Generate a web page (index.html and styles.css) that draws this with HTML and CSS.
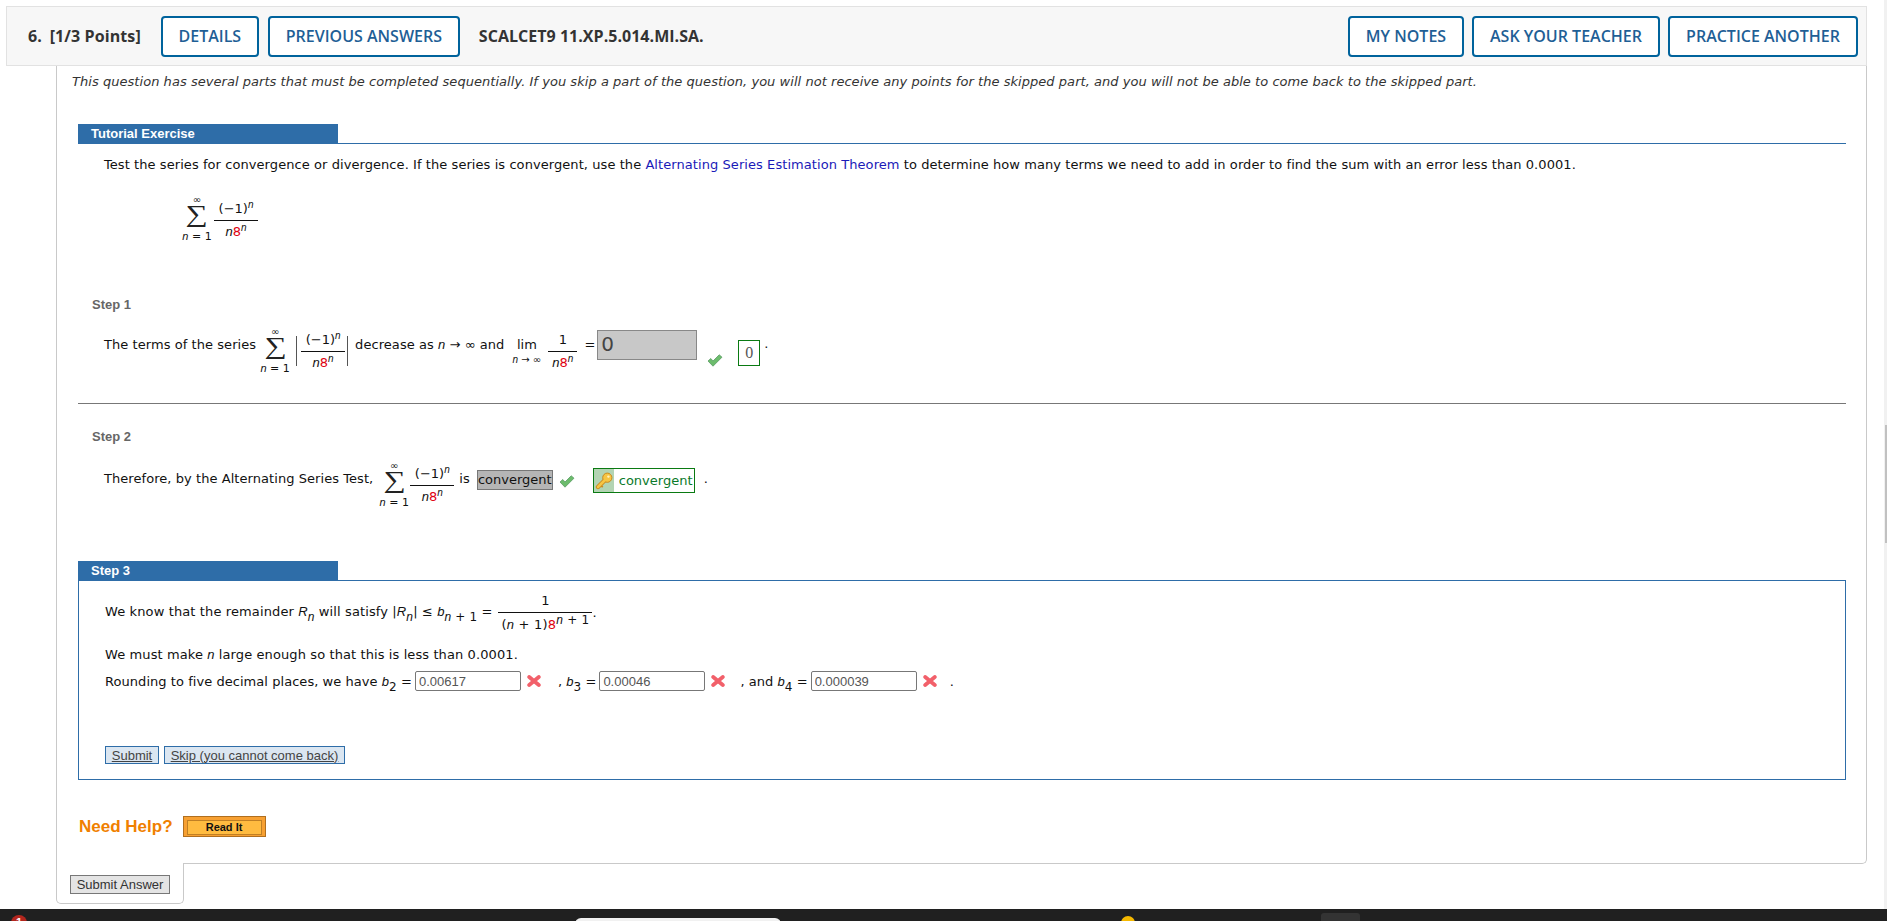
FILE: index.html
```html
<!DOCTYPE html>
<html lang="en">
<head>
<meta charset="utf-8">
<title>Question 6</title>
<link rel="stylesheet" href="styles.css">
</head>
<body>
<div class="window">
  <div class="page">
    <header class="q-head">
      <span class="q-num">6.</span>
      <span class="q-pts">[1/3 Points]</span>
      <a class="hbtn hbtn-details">DETAILS</a>
      <a class="hbtn hbtn-prev">PREVIOUS ANSWERS</a>
      <span class="q-code">SCALCET9 11.XP.5.014.MI.SA.</span>
      <span class="spacer"></span>
      <a class="hbtn hbtn-notes">MY NOTES</a>
      <a class="hbtn hbtn-ask">ASK YOUR TEACHER</a>
      <a class="hbtn hbtn-practice">PRACTICE ANOTHER</a>
    </header>
    <main class="panel">
      <p class="intro">This question has several parts that must be completed sequentially. If you skip a part of the question, you will not receive any points for the skipped part, and you will not be able to come back to the skipped part.</p>
      <div class="sec-head tutorial"><span class="sec-tab">Tutorial Exercise</span></div>
      <p class="problem">Test the series for convergence or divergence. If the series is convergent, use the <a class="term">Alternating Series Estimation Theorem</a> to determine how many terms we need to add in order to find the sum with an error less than 0.0001.</p>
      <div class="display-sum">
        <span class="sum"><span class="sum-top">∞</span><span class="sum-sym">∑</span><span class="sum-bot"><i>n</i> = 1</span></span>
        <span class="frac f-series"><span class="num">(−1)<sup><i>n</i></sup></span><span class="den"><i>n</i><b class="red">8</b><sup><i>n</i></sup></span></span>
      </div>

      <div class="step-label step1-label">Step 1</div>
      <div class="mrow row1">
        <span class="t">The terms of the series</span>
        <span class="sum s-a"><span class="sum-top">∞</span><span class="sum-sym">∑</span><span class="sum-bot"><i>n</i> = 1</span></span>
        <span class="absv">
          <span class="frac f-series"><span class="num">(−1)<sup><i>n</i></sup></span><span class="den"><i>n</i><b class="red">8</b><sup><i>n</i></sup></span></span>
        </span>
        <span class="t t-dec">decrease as <i>n</i> → ∞ and</span>
        <span class="lim"><span class="lim-top">lim</span><span class="lim-bot"><i>n</i> → ∞</span></span>
        <span class="frac f-one"><span class="num">1</span><span class="den"><i>n</i><b class="red">8</b><sup><i>n</i></sup></span></span>
        <span class="t t-eq">=</span>
        <span class="ans-grey">0</span>
        <svg class="check c-a" viewBox="0 0 16 13"><path d="M1 7 L3.8 4.5 L6 7 L12.2 .8 L15 3.2 L6 12.2 Z" fill="#6cbc6c" stroke="#5c9c66" stroke-width=".8"/></svg>
        <span class="ans-box">0</span>
        <span class="t t-dot">.</span>
      </div>

      <hr class="rule">

      <div class="step-label step2-label">Step 2</div>
      <div class="mrow row2">
        <span class="t">Therefore, by the Alternating Series Test,</span>
        <span class="sum s-b"><span class="sum-top">∞</span><span class="sum-sym">∑</span><span class="sum-bot"><i>n</i> = 1</span></span>
        <span class="frac f-series f-b"><span class="num">(−1)<sup><i>n</i></sup></span><span class="den"><i>n</i><b class="red">8</b><sup><i>n</i></sup></span></span>
        <span class="t t-is">is</span>
        <span class="ans-word">convergent</span>
        <svg class="check c-b" viewBox="0 0 16 13"><path d="M1 7 L3.8 4.5 L6 7 L12.2 .8 L15 3.2 L6 12.2 Z" fill="#6cbc6c" stroke="#5c9c66" stroke-width=".8"/></svg>
        <span class="key-box">
          <span class="key-cell">
            <svg class="key" viewBox="0 0 18 18"><path d="M9 9 L3 15" stroke="#c98a1f" stroke-width="4.4" stroke-linecap="round"/><path d="M5.5 13.5 L7.8 15" stroke="#c98a1f" stroke-width="2"/><circle cx="12.3" cy="5.7" r="4.6" fill="#f6c544" stroke="#c98a1f"/><path d="M9 9 L3 15" stroke="#f6c544" stroke-width="2.6" stroke-linecap="round"/><circle cx="13.4" cy="4.6" r="1.2" fill="#fff2bf"/></svg>
          </span>
          <span class="key-text">convergent</span>
        </span>
        <span class="t t-dot2">.</span>
      </div>

      <div class="sec-head step3-head"><span class="sec-tab">Step 3</span></div>
      <section class="step3">
        <div class="mrow row3a">
          <span class="t t-know">We know that the remainder <i>R</i><sub><i>n</i></sub> will satisfy |<i>R</i><sub><i>n</i></sub>| ≤ <i>b</i><sub><i>n</i> + 1</sub> =</span>
          <span class="frac f-rem"><span class="num">1</span><span class="den">(<i>n</i> + 1)<b class="red">8</b><sup><i>n</i> + 1</sup></span></span>
          <span class="t-per">.</span>
        </div>
        <p class="line l-must">We must make <i>n</i> large enough so that this is less than 0.0001.</p>
        <div class="mrow row3c">
          <span class="t3">Rounding to five decimal places, we have <i>b</i><sub>2</sub> =</span>
          <input class="num-in" value="0.00617" readonly>
          <svg class="cross" viewBox="0 0 14 12"><path d="M2.2 2 L11.8 10 M11.8 2 L2.2 10" stroke="#f2606a" stroke-width="3.8" stroke-linecap="round"/></svg>
          <span class="t3 t-b3">, <i>b</i><sub>3</sub> =</span>
          <input class="num-in" value="0.00046" readonly>
          <svg class="cross" viewBox="0 0 14 12"><path d="M2.2 2 L11.8 10 M11.8 2 L2.2 10" stroke="#f2606a" stroke-width="3.8" stroke-linecap="round"/></svg>
          <span class="t3 t-b4">, and <i>b</i><sub>4</sub> =</span>
          <input class="num-in" value="0.000039" readonly>
          <svg class="cross" viewBox="0 0 14 12"><path d="M2.2 2 L11.8 10 M11.8 2 L2.2 10" stroke="#f2606a" stroke-width="3.8" stroke-linecap="round"/></svg>
          <span class="t3 t-end">.</span>
        </div>
        <div class="step-btns">
          <button class="sbtn sbtn-submit">Submit</button>
          <button class="sbtn sbtn-skip">Skip (you cannot come back)</button>
        </div>
      </section>

      <div class="help">
        <span class="help-t">Need Help?</span>
        <button class="read"><span class="read-in">Read It</span></button>
      </div>
    </main>
    <div class="submit-tab"><button class="submit-ans">Submit Answer</button></div>
  </div>
  <div class="scrollbar"><div class="thumb"></div></div>
</div>
<footer class="taskbar">
  <span class="badge">1</span>
  <span class="pill"></span>
  <span class="dot"></span>
  <span class="tile"></span>
</footer>
</body>
</html>
```
FILE: styles.css
```css
* { box-sizing: border-box; }
html, body { margin: 0; height: 921px; overflow: hidden; background: #fff; }
body { font-family: "DejaVu Sans", Verdana, sans-serif; font-size: 13px; color: #111; }
.window { display: flex; height: 909px; overflow: hidden; }
.page { flex: 1; min-width: 0; padding: 6px 17px 0 6px; }
.scrollbar { width: 3px; background: #f1f1f1; padding-top: 425px; }
.thumb { height: 118px; width: 2px; margin-left: 1px; background: #c1c1c1; }

.q-head { height: 60px; display: flex; align-items: center; background: #f7f7f7; border: 1px solid #e2e2e2; padding: 0 8px 0 21px; font-family: "Open Sans", sans-serif; font-size: 16px; font-weight: 600; color: #333; }
.q-num, .q-pts, .q-code { font-weight: 700; }
.q-pts { margin-left: 8px; margin-right: 20px; letter-spacing: .1px; }
.q-code { letter-spacing: .03px; }
.hbtn { height: 41px; display: flex; align-items: center; justify-content: center; border: 2px solid #00639c; border-radius: 4px; color: #1f5f96; background: #fff; margin-right: 8px; padding-bottom: 1px; }
.hbtn-details { width: 98px; margin-right: 9px; }
.hbtn-prev { width: 192px; margin-right: 19px; }
.hbtn-notes { width: 116px; }
.hbtn-ask { width: 188px; }
.hbtn-practice { width: 190px; margin-right: 0; }
.spacer { flex: 1; }

.panel { height: 798px; margin-left: 50px; border: 1px solid #c9c9c9; border-top: 0; border-radius: 0 0 5px 0; padding: 6px 20px 0 21px; }
.intro { margin: 0 0 0 -6px; line-height: 20px; font-style: italic; color: #333; white-space: nowrap; letter-spacing: .044px; }
.sec-head { height: 20px; border-bottom: 1px solid #2e6da8; }
.tutorial { margin-top: 32px; }
.sec-tab { display: block; width: 260px; height: 20px; background: #2e6da8; color: #fff; font: bold 13px/19px "Liberation Sans", sans-serif; padding-left: 13px; }
.problem { margin: 11px 0 0 26px; line-height: 20px; white-space: nowrap; letter-spacing: .07px; }
.term { color: #1a1ab8; }

.display-sum { display: flex; align-items: center; height: 49px; margin: 20px 0 0 104px; }
.red { color: #e0000f; font-weight: 400; }
sup, sub { font-size: 10px; line-height: 0; }
i { font-family: "Liberation Sans", sans-serif; }

.sum { display: inline-flex; flex-direction: column; align-items: center; width: 30px; flex: none; }
.sum-top { height: 10px; font-size: 10px; line-height: 10px; }
.sum-sym { height: 23px; font-family: "Liberation Serif", serif; font-size: 24px; line-height: 18px; color: #222; transform: scaleX(1.3); }
.sum-bot { height: 15px; margin-top: 1px; font-size: 11px; line-height: 15px; white-space: nowrap; }

.frac { display: inline-flex; flex-direction: column; align-items: center; flex: none; }
.frac .num { height: 22px; line-height: 22px; padding: 0 2px; white-space: nowrap; }
.frac .den { border-top: 1px solid #111; align-self: stretch; text-align: center; height: 22px; line-height: 22px; padding: 0 2px; white-space: nowrap; }
.f-series { width: 44px; margin-left: 2px; }

.step-label { font: bold 13px/16px "Liberation Sans", sans-serif; color: #666; margin-left: 14px; }
.step1-label { margin-top: 53px; }
.step2-label { margin-top: 25px; }

.mrow { display: flex; align-items: center; }
.t { padding-bottom: 13px; white-space: nowrap; letter-spacing: .06px; }
.row1 { height: 42px; margin: 17px 0 0 26px; }
.row2 { height: 42px; margin: 19px 0 0 26px; }
.s-a { margin-left: 4px; }
.absv { display: inline-flex; margin-left: 6px; padding: 0 2px 0 1px; height: 30px; border-left: 1px solid #555; border-right: 1px solid #555; align-items: center; }
.absv .f-series { margin-left: 3px; }
.t-dec { margin-left: 7px; }
.lim { display: inline-flex; flex-direction: column; align-items: center; width: 33px; margin-left: 6px; flex: none; }
.lim-top { line-height: 16px; height: 16px; margin-bottom: 1px; }
.lim-bot { font-size: 10px; line-height: 12px; height: 12px; white-space: nowrap; }
.f-one { width: 29px; margin-left: 5px; }
.t-eq { margin-left: 7px; }
.ans-grey { width: 100px; height: 30px; margin: 0 0 12px 2px; background: #c8c8c8; border: 1px solid #888; font: 20px/26px "DejaVu Sans", sans-serif; padding-left: 3px; color: #444; }
.check { width: 16px; height: 13px; flex: none; }
.c-a { margin: 18px 0 0 10px; }
.ans-box { width: 22px; height: 26px; margin: 4px 0 0 15px; border: 1px solid #0a7a12; font: 16px/24px "Liberation Serif", serif; color: #555; text-align: center; }
.t-dot { margin-left: 4px; padding-bottom: 16px; }

.rule { border: 0; height: 1px; background: #777; margin: 31px 0 0; }

.f-b { margin-left: 1px; }
.s-b { margin-left: 6px; }
.t-is { margin-left: 5px; }
.ans-word { width: 76px; height: 20px; margin: 0 0 10px 7px; background: #b5b5b5; border: 1px solid #777; line-height: 18px; text-align: center; white-space: nowrap; }
.c-b { margin: 0 0 8px 6px; }
.key-box { display: flex; height: 25px; width: 102px; margin: 0 0 9px 18px; border: 1px solid #0a7a12; }
.key-cell { width: 20px; background: #b3d4b3; display: flex; align-items: center; justify-content: center; }
.key { width: 18px; height: 18px; }
.key-text { color: #0a7a2a; margin-left: 5px; line-height: 23px; }
.t-dot2 { margin-left: 9px; }

.step3-head { margin-top: 55px; }
.step3 { height: 199px; border: 1px solid #2e6da8; border-top: 0; padding: 10px 0 0 26px; }
.row3a { height: 44px; }
.t-know { padding-bottom: 4px; letter-spacing: .12px; }
.t-know sub, .f-rem sup, .t3 sub { font-size: 12px; vertical-align: -5px; }
.f-rem sup { vertical-align: 5px; }
.t-per { margin-top: -2px; }
.f-rem { width: 94px; margin-left: 6px; }
.f-rem .num { height: 21px; line-height: 20px; }
.f-rem .den { height: 23px; line-height: 24px; letter-spacing: .2px; }
.line { margin: 0; line-height: 20px; letter-spacing: .1px; }
.l-must { margin-top: 10px; }
.row3c { height: 20px; margin-top: 6px; }
.t3 { white-space: nowrap; letter-spacing: .05px; }
.num-in { width: 106px; height: 20px; margin-left: 3px; border: 1px solid #777; border-radius: 2px; padding: 0 3px; font: 13px "Liberation Sans", sans-serif; color: #555; background: #fff; outline: 0; }
.cross { width: 14px; height: 12px; flex: none; margin-left: 6px; }
.t-b3 { margin-left: 17px; }
.t-b4 { margin-left: 15px; }
.t-end { margin-left: 13px; }
.step-btns { display: flex; gap: 5px; margin-top: 55px; }
.sbtn { height: 18px; padding: 0; border: 1px solid #2e6da8; background: #dbe6f1; font: 13px/15px "Liberation Sans", sans-serif; color: #444; text-decoration: underline; border-radius: 0; }
.sbtn-submit { width: 54px; }
.sbtn-skip { width: 181px; }

.help { display: flex; align-items: center; height: 21px; margin: 36px 0 0 1px; }
.help-t { font: bold 17px "Liberation Sans", sans-serif; color: #f08000; }
.read { width: 83px; height: 21px; margin-left: 10px; padding: 3px; border: 1px solid #b06f1f; background: #f7a032; }
.read-in { display: block; height: 15px; border: 1px solid #c07f24; background: #ffbb40; font: bold 11px/13px "Liberation Sans", sans-serif; color: #111; text-align: center; }

.submit-tab { width: 128px; height: 41px; margin: -1px 0 0 50px; background: #fff; border: 1px solid #c9c9c9; border-top: 0; border-radius: 0 0 5px 5px; padding: 12px 0 0 13px; }
.submit-ans { display: block; width: 100px; height: 19px; padding: 0; border: 1px solid #777; background: #e4e4e4; font: 13px/16px "Liberation Sans", sans-serif; color: #333; border-radius: 0; }

.taskbar { height: 12px; background: #202020; display: flex; overflow: hidden; }
.badge { width: 16px; height: 16px; border-radius: 50%; background: #b3261e; margin: 6px 0 0 11px; color: #fff; font: bold 11px/14px "Liberation Sans", sans-serif; text-align: center; }
.pill { width: 206px; height: 20px; border-radius: 6px; background: #f1f1f1; margin: 9px 0 0 548px; }
.dot { width: 14px; height: 14px; border-radius: 50%; background: #f6b900; margin: 7px 0 0 340px; }
.tile { width: 39px; height: 14px; border-radius: 3px 3px 0 0; background: #333; margin: 4px 0 0 186px; }
```
